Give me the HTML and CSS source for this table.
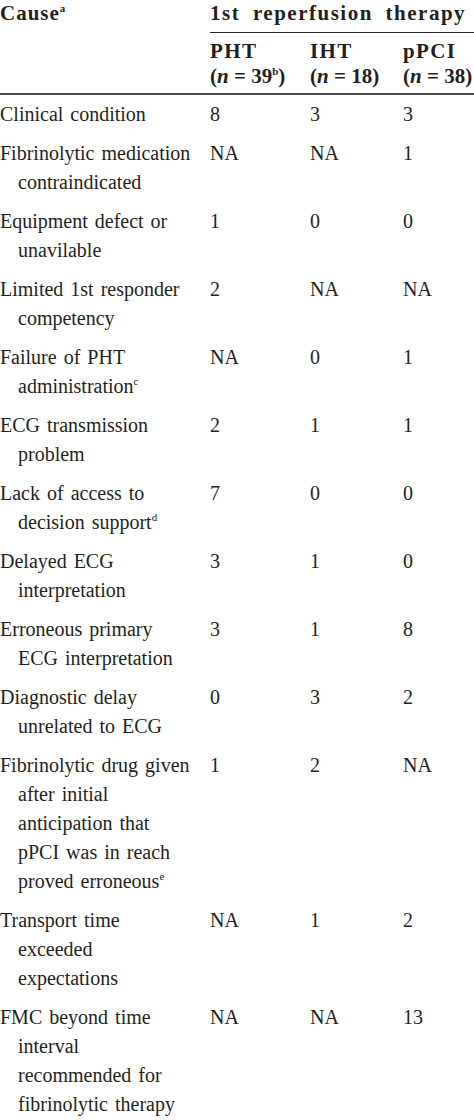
FILE: index.html
```html
<!DOCTYPE html>
<html lang="en">
<head>
<meta charset="utf-8">
<title>Causes of delay</title>
<link rel="stylesheet" href="styles.css">
</head>
<body>
<table class="tbl">
  <colgroup>
    <col class="c1"><col class="c2"><col class="c3"><col class="c4">
  </colgroup>
  <thead>
    <tr class="h1">
      <th class="cause">Cause<sup>a</sup></th>
      <th class="group" colspan="3">1st reperfusion therapy</th>
    </tr>
    <tr class="h2">
      <th></th>
      <th><span class="name">PHT</span><br><span class="num">(<i>n</i> = 39<sup>b</sup>)</span></th>
      <th><span class="name">IHT</span><br><span class="num">(<i>n</i> = 18)</span></th>
      <th><span class="name">pPCI</span><br><span class="num">(<i>n</i> = 38)</span></th>
    </tr>
  </thead>
  <tbody>
    <tr><td class="lbl">Clinical condition</td><td>8</td><td>3</td><td>3</td></tr>
    <tr><td class="lbl">Fibrinolytic medication<br>contraindicated</td><td>NA</td><td>NA</td><td>1</td></tr>
    <tr><td class="lbl">Equipment defect or<br>unavilable</td><td>1</td><td>0</td><td>0</td></tr>
    <tr><td class="lbl">Limited 1st responder<br>competency</td><td>2</td><td>NA</td><td>NA</td></tr>
    <tr><td class="lbl">Failure of PHT<br>administration<sup>c</sup></td><td>NA</td><td>0</td><td>1</td></tr>
    <tr><td class="lbl">ECG transmission<br>problem</td><td>2</td><td>1</td><td>1</td></tr>
    <tr><td class="lbl">Lack of access to<br>decision support<sup>d</sup></td><td>7</td><td>0</td><td>0</td></tr>
    <tr><td class="lbl">Delayed ECG<br>interpretation</td><td>3</td><td>1</td><td>0</td></tr>
    <tr><td class="lbl">Erroneous primary<br>ECG interpretation</td><td>3</td><td>1</td><td>8</td></tr>
    <tr><td class="lbl">Diagnostic delay<br>unrelated to ECG</td><td>0</td><td>3</td><td>2</td></tr>
    <tr><td class="lbl">Fibrinolytic drug given<br>after initial<br>anticipation that<br>pPCI was in reach<br>proved erroneous<sup>e</sup></td><td>1</td><td>2</td><td>NA</td></tr>
    <tr><td class="lbl">Transport time<br>exceeded<br>expectations</td><td>NA</td><td>1</td><td>2</td></tr>
    <tr><td class="lbl">FMC beyond time<br>interval<br>recommended for<br>fibrinolytic therapy</td><td>NA</td><td>NA</td><td>13</td></tr>
  </tbody>
</table>
</body>
</html>
```

FILE: styles.css
```css
html, body {
  margin: 0;
  padding: 0;
  background: #ffffff;
  overflow: hidden;
}

body {
  font-family: "Liberation Serif", "Times New Roman", serif;
  font-size: 20px;
  color: #231f20;
}

.tbl {
  width: 474px;
  table-layout: fixed;
  border-collapse: collapse;
  border-spacing: 0;
}

.c1 { width: 210px; }
.c2 { width: 100px; }
.c3 { width: 93px; }
.c4 { width: 71px; }

.tbl th,
.tbl td {
  text-align: left;
  vertical-align: top;
  padding: 0;
  white-space: nowrap;
  overflow: visible;
}

.tbl th {
  font-weight: bold;
  font-size: 21px;
}

.h1 th {
  line-height: 26px;
  padding-bottom: 6px;
}

.h1 .cause {
  letter-spacing: 1px;
}

.h1 .group {
  border-bottom: 1.5px solid #2a2a2a;
  letter-spacing: 1.5px;
  word-spacing: 6px;
}

.h2 th {
  line-height: 25px;
  padding-top: 6px;
  padding-bottom: 4px;
  border-bottom: 2.5px solid #4a4a4a;
}

.h2 .name {
  letter-spacing: 1.4px;
}

.h2 .num {
  letter-spacing: 0;
  word-spacing: 0;
}

.tbl th i {
  font-style: italic;
}

.tbl sup {
  font-size: 11px;
  line-height: 0;
  vertical-align: 8px;
  letter-spacing: 0;
}

.tbl td {
  line-height: 29px;
  padding-top: 5px;
  padding-bottom: 5px;
}

.tbl td.lbl {
  padding-left: 18px;
  text-indent: -18px;
  word-spacing: 2px;
}
```
